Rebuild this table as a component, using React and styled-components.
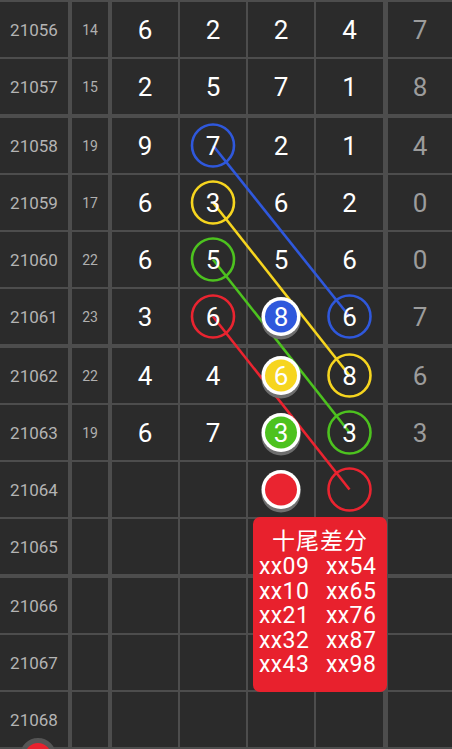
import React from "react";
import styled, { createGlobalStyle } from "styled-components";

const LINE = "#4d4d4d";
const BG = "#2b2b2b";

const Global = createGlobalStyle`
  html, body { margin: 0; padding: 0; background: ${BG}; overflow: hidden; }
  * { box-sizing: border-box; }
`;

const Board = styled.div`
  position: relative;
  width: 452px;
  height: 749px;
  background: ${LINE};
  padding-top: 2px;
  font-family: Roboto, "Noto Sans", "Noto Sans CJK SC", sans-serif;
  overflow: hidden;
`;

const Row = styled.div`
  display: grid;
  grid-template-columns: 68px 40px 70px 68px 68px 69px 69px;
  height: ${(p) => 55 + p.$gap}px;
  padding-top: ${(p) => p.$gap}px;
`;

const Cell = styled.div`
  display: flex;
  align-items: center;
  justify-content: center;
  background: ${BG};
  margin-left: ${(p) => p.$sep || 0}px;
`;

const Issue = styled.span`
  color: #b4b4b4;
  font-size: 17px;
  position: relative;
  z-index: 2;
`;

const Sum = styled.span`
  color: #b0b0b0;
  font-size: 14px;
  position: relative;
  z-index: 2;
`;

const Digit = styled.span`
  color: #ffffff;
  font-size: 26px;
  position: relative;
  z-index: 2;
`;

const Tail = styled.span`
  color: #9c9c9c;
  font-size: 26px;
  position: relative;
  z-index: 2;
`;

const Overlay = styled.svg`
  position: absolute;
  left: 0;
  top: 0;
  z-index: 1;
  pointer-events: none;
`;

const Popup = styled.div`
  position: absolute;
  left: 253px;
  top: 517px;
  width: 134px;
  height: 175px;
  background: #e8212d;
  border-radius: 7px;
  z-index: 3;
  color: #fff;
  padding: 9px 0 0 6px;
  font-family: Roboto, "Noto Sans CJK SC", sans-serif;
`;

const PopTitle = styled.div`
  font-family: "Noto Sans CJK SC", sans-serif;
  font-size: 23px;
  line-height: 26px;
  text-align: center;
  padding-right: 6px;
  letter-spacing: 1px;
`;

const PopGrid = styled.div`
  display: grid;
  grid-template-columns: 67px 60px;
  margin-top: 3px;
  font-size: 23px;
  line-height: 24.5px;
  letter-spacing: 0.4px;
`;

const Fab = styled.div`
  position: absolute;
  left: 20px;
  top: 738px;
  width: 36px;
  height: 36px;
  border-radius: 50%;
  background: #e8212d;
  border: 5px solid #555;
  z-index: 4;
`;

const rows = [
  { id: 21056, s: 14, d: [6, 2, 2, 4], t: 7, gap: 0 },
  { id: 21057, s: 15, d: [2, 5, 7, 1], t: 8, gap: 2 },
  { id: 21058, s: 19, d: [9, 7, 2, 1], t: 4, gap: 4 },
  { id: 21059, s: 17, d: [6, 3, 6, 2], t: 0, gap: 2 },
  { id: 21060, s: 22, d: [6, 5, 5, 6], t: 0, gap: 2 },
  { id: 21061, s: 23, d: [3, 6, 8, 6], t: 7, gap: 2 },
  { id: 21062, s: 22, d: [4, 4, 6, 8], t: 6, gap: 4 },
  { id: 21063, s: 19, d: [6, 7, 3, 3], t: 3, gap: 2 },
  { id: 21064, s: "", d: ["", "", "", ""], t: "", gap: 2 },
  { id: 21065, s: "", d: ["", "", "", ""], t: "", gap: 2 },
  { id: 21066, s: "", d: ["", "", "", ""], t: "", gap: 4 },
  { id: 21067, s: "", d: ["", "", "", ""], t: "", gap: 2 },
  { id: 21068, s: "", d: ["", "", "", ""], t: "", gap: 2 },
];

const seps = [4, 2, 2, 2];
const colX = [145, 213, 281, 349.5];
const rowY = {};
(() => {
  let y = 2;
  rows.forEach((r) => {
    y += r.gap;
    rowY[r.id] = y + 27.5;
    y += 55;
  });
})();

const C = {
  blue: "#2f58dc",
  yellow: "#f6d51f",
  green: "#4dc21f",
  red: "#ea2430",
};

const links = [
  { c: C.blue, a: [1, 21058], b: [3, 21061] },
  { c: C.yellow, a: [1, 21059], b: [3, 21062] },
  { c: C.green, a: [1, 21060], b: [3, 21063] },
  { c: C.red, a: [1, 21061], b: [3, 21064] },
];

const filled = [
  { c: C.blue, at: [2, 21061] },
  { c: C.yellow, at: [2, 21062] },
  { c: C.green, at: [2, 21063] },
  { c: C.red, at: [2, 21064] },
];

const pairs = [
  ["xx09", "xx54"],
  ["xx10", "xx65"],
  ["xx21", "xx76"],
  ["xx32", "xx87"],
  ["xx43", "xx98"],
];

export default function App() {
  return (
    <>
      <Global />
      <Board>
        {rows.map((r) => (
          <Row key={r.id} $gap={r.gap}>
            <Cell>
              <Issue>{r.id}</Issue>
            </Cell>
            <Cell $sep={4}>
              <Sum>{r.s}</Sum>
            </Cell>
            {r.d.map((v, i) => (
              <Cell key={i} $sep={seps[i]}>
                <Digit>{v}</Digit>
              </Cell>
            ))}
            <Cell $sep={5}>
              <Tail>{r.t}</Tail>
            </Cell>
          </Row>
        ))}
        <Overlay width="452" height="749" viewBox="0 0 452 749">
          {links.map((l, i) => {
            const x1 = colX[l.a[0]], y1 = rowY[l.a[1]];
            const x2 = colX[l.b[0]], y2 = rowY[l.b[1]];
            return (
              <g key={i} stroke={l.c} strokeWidth="2.6" fill="none">
                <line x1={x1} y1={y1} x2={x2} y2={y2} />
                <circle cx={x1} cy={y1} r="21" />
                <circle cx={x2} cy={y2} r="21" />
              </g>
            );
          })}
          {filled.map((f, i) => {
            const x = colX[f.at[0]], y = rowY[f.at[1]];
            return (
              <g key={i}>
                <circle cx={x} cy={y + 3.5} r="19.5" fill="#6e6e6e" />
                <circle cx={x} cy={y} r="19.5" fill="#ffffff" />
                <circle cx={x} cy={y} r="16" fill={f.c} />
              </g>
            );
          })}
        </Overlay>
        <Popup>
          <PopTitle>十尾差分</PopTitle>
          <PopGrid>
            {pairs.map(([a, b]) => (
              <React.Fragment key={a}>
                <span>{a}</span>
                <span>{b}</span>
              </React.Fragment>
            ))}
          </PopGrid>
        </Popup>
        <Fab />
      </Board>
    </>
  );
}
